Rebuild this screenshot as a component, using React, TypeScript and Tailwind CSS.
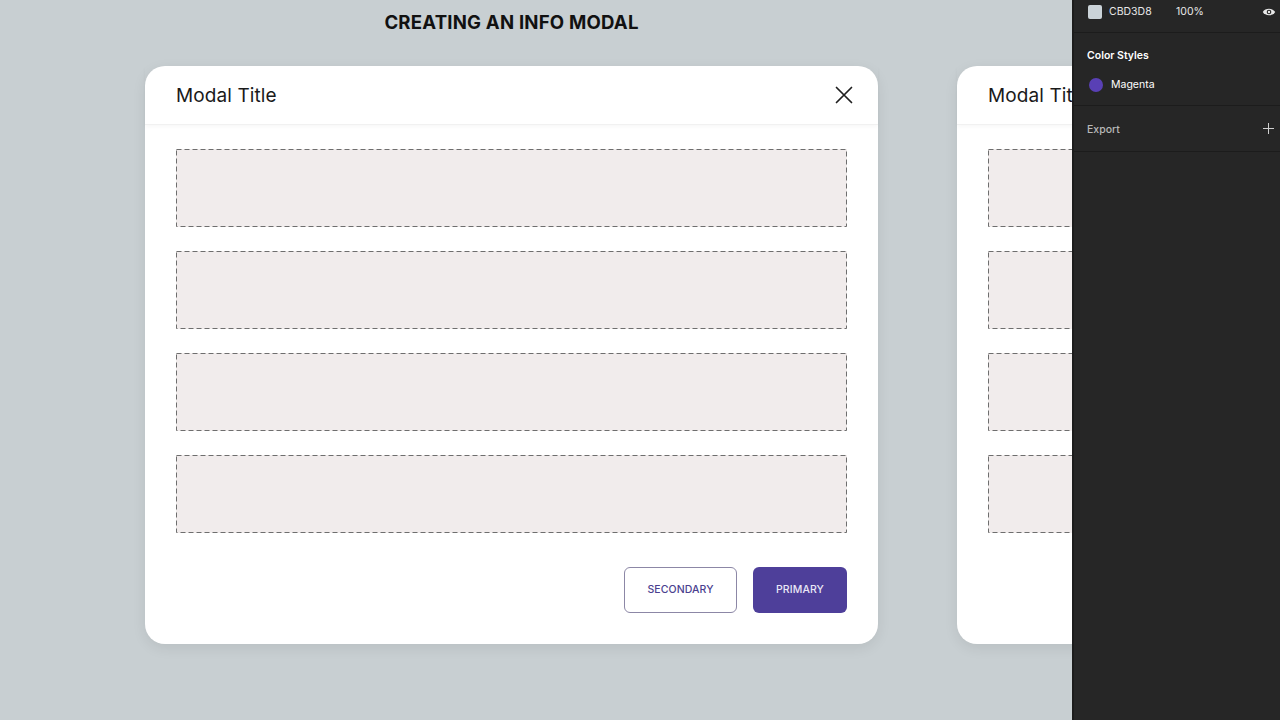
import React from 'react';

const font = { fontFamily: 'Inter, "Noto Sans", sans-serif' };

function Placeholder() {
  return (
    <div className="relative h-[78px] w-[671px] bg-[#f1ecec]">
      <svg className="absolute inset-0 w-full h-full" preserveAspectRatio="none">
        <rect x="0.5" y="0.5" width="670" height="77" fill="none" stroke="#6e6e6e" strokeWidth="1" strokeDasharray="5 3" />
      </svg>
    </div>
  );
}

function Modal() {
  return (
    <div className="w-[733px] h-[578px] shrink-0 bg-white rounded-[20px] shadow-[0_4px_14px_rgba(0,0,0,0.08)] flex flex-col">
      <div className="h-[59px] flex items-center justify-between pl-[31px] pr-[24px] border-b border-[#f1f1f1] shadow-[0_2px_4px_rgba(0,0,0,0.03)]">
        <h2 className="text-[19px] text-[#1a1a1a] tracking-[0.1px] mt-[2px]">Modal Title</h2>
        <svg width="18" height="18" viewBox="0 0 18 18" className="mr-[1px]">
          <path d="M1.5 1.5 L16.5 16.5 M16.5 1.5 L1.5 16.5" stroke="#1f1f1f" strokeWidth="1.7" strokeLinecap="round" />
        </svg>
      </div>
      <div className="flex flex-col gap-[24px] px-[31px] pt-[24px]">
        {[0, 1, 2, 3].map((i) => (
          <Placeholder key={i} />
        ))}
      </div>
      <div className="flex justify-end gap-[16px] px-[31px] mt-[34px]">
        <button className="w-[113px] h-[46px] rounded-[6px] border border-[#8c87a6] bg-white text-[10.5px] font-medium text-[#4b3f8f] tracking-[0.1px]">
          SECONDARY
        </button>
        <button className="w-[94px] h-[46px] rounded-[6px] bg-[#4e3f9a] text-[10.5px] font-medium text-[#e9e6f6] tracking-[0.1px]">
          PRIMARY
        </button>
      </div>
    </div>
  );
}

export default function App() {
  return (
    <div className="w-[1280px] h-[720px] flex overflow-hidden bg-[#c8cfd2]" style={font}>
      <div className="w-[1072px] h-full flex flex-col overflow-hidden">
        <div className="w-[733px] ml-[145px] h-[66px] flex justify-center pt-[11px]">
          <h1 className="text-[18.6px] font-bold text-[#111] tracking-[0.2px] leading-[22px]">CREATING AN INFO MODAL</h1>
        </div>
        <div className="flex gap-[79px] pl-[145px]">
          <Modal />
          <Modal />
        </div>
      </div>
      <div className="flex-1 h-full bg-[#262626] border-l-2 border-[#1c1c1c] text-[10.5px] text-[#e8e8e8]">
        <div className="h-[33px] flex items-center pl-[14px] pr-[4px] border-b border-[#1c1c1c]">
          <div className="w-[14px] h-[14px] bg-[#cbd3d8] rounded-[2px] -mt-[9px]" />
          <span className="ml-[7px] w-[67px] -mt-[8px]">CBD3D8</span>
          <span className="-mt-[8px]">100%</span>
          <svg width="14" height="10" viewBox="0 0 14 10" className="ml-auto -mt-[9px]">
            <path d="M0.8 5 C3 0.8 11 0.8 13.2 5 C11 9.2 3 9.2 0.8 5 Z" fill="#e8e8e8" />
            <circle cx="7" cy="5" r="2.3" fill="#262626" />
            <circle cx="7" cy="5" r="1.2" fill="#e8e8e8" />
          </svg>
        </div>
        <div className="h-[73px] pl-[13px] pt-[15px] border-b border-[#1c1c1c]">
          <div className="font-semibold text-white">Color Styles</div>
          <div className="flex items-center mt-[13px] ml-[2px]">
            <div className="w-[14px] h-[14px] rounded-full bg-[#5940b5]" />
            <span className="ml-[8px] text-white">Magenta</span>
          </div>
        </div>
        <div className="h-[46px] flex items-center justify-between pl-[13px] pr-[6px] border-b border-[#1c1c1c]">
          <span className="font-medium text-[#b8b8b8] mt-[3px]">Export</span>
          <svg width="11" height="11" viewBox="0 0 11 11">
            <path d="M5.5 0 V11 M0 5.5 H11" stroke="#cfcfcf" strokeWidth="1" />
          </svg>
        </div>
      </div>
    </div>
  );
}
